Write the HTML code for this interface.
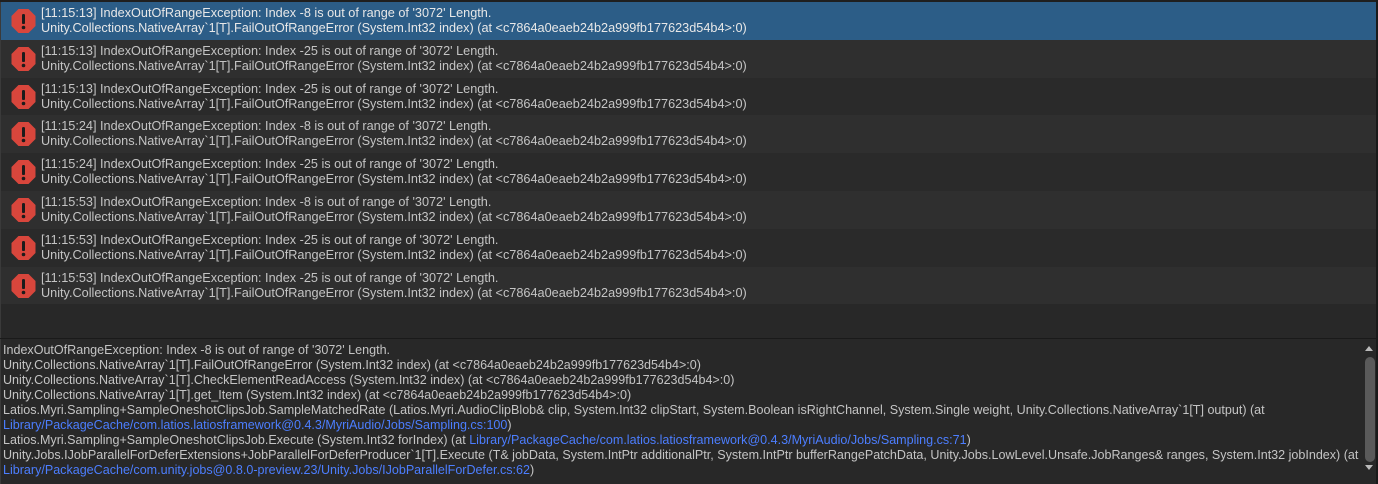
<!DOCTYPE html>
<html><head><style>
html,body{margin:0;padding:0;}
body{width:1378px;height:484px;background:#282828;overflow:hidden;position:relative;font-family:"Liberation Sans",sans-serif;font-size:12.7px;color:#c4c4c4;}
.top{position:absolute;left:0;top:0;width:1378px;height:2px;background:#1f1f1f;}
.list{position:absolute;left:0;top:2px;width:1376px;}
.row{position:relative;height:37.8px;background:#2f2f2f;border-left:1px solid #3a3a3a;box-sizing:border-box;}
.row.alt{background:#2a2a2a;}
.row.sel{background:#2c5d87;color:#e8e8e8;}
.row svg{position:absolute;left:9px;top:6px;}
.row .t{position:absolute;left:40px;top:4px;line-height:15px;white-space:nowrap;}
.rest{position:absolute;left:0;top:304px;width:1376px;height:34px;background:#282828;border-left:1px solid #3a3a3a;box-sizing:border-box;}
.div{position:absolute;left:0;top:338px;width:1378px;height:1px;background:#1a1a1a;}
.bottom{position:absolute;left:0;top:339px;width:1362px;height:145px;border-left:1px solid #3a3a3a;box-sizing:border-box;font-size:12.55px;}
.bottom .t{position:absolute;left:2px;top:4px;line-height:15.05px;white-space:nowrap;}
a{color:#4c7eff;text-decoration:none;}
.sb{position:absolute;left:1362px;top:339px;width:14px;height:145px;background:#282828;}
.thumb{position:absolute;left:1365px;top:357px;width:10px;height:105px;background:#5a5a5a;border-radius:5px;}
.rb{position:absolute;left:1376px;top:0;width:2px;height:484px;background:#1a1a1a;}
</style></head><body>
<div class="top"></div>
<div class="list">
<div class="row sel"><svg width="27" height="26" viewBox="0 0 26 26"><polygon points="8,1 18,1 25,8 25,18 18,25 8,25 1,18 1,8" fill="#d8463c"/><rect x="11.5" y="6" width="3" height="10" rx="1.3" fill="#1b1b1b"/><circle cx="13" cy="19.5" r="1.8" fill="#1b1b1b"/></svg><div class="t">[11:15:13] IndexOutOfRangeException: Index -8 is out of range of '3072' Length.<br>Unity.Collections.NativeArray`1[T].FailOutOfRangeError (System.Int32 index) (at &lt;c7864a0eaeb24b2a999fb177623d54b4&gt;:0)</div></div>
<div class="row"><svg width="27" height="26" viewBox="0 0 26 26"><polygon points="8,1 18,1 25,8 25,18 18,25 8,25 1,18 1,8" fill="#d8463c"/><rect x="11.5" y="6" width="3" height="10" rx="1.3" fill="#1b1b1b"/><circle cx="13" cy="19.5" r="1.8" fill="#1b1b1b"/></svg><div class="t">[11:15:13] IndexOutOfRangeException: Index -25 is out of range of '3072' Length.<br>Unity.Collections.NativeArray`1[T].FailOutOfRangeError (System.Int32 index) (at &lt;c7864a0eaeb24b2a999fb177623d54b4&gt;:0)</div></div>
<div class="row alt"><svg width="27" height="26" viewBox="0 0 26 26"><polygon points="8,1 18,1 25,8 25,18 18,25 8,25 1,18 1,8" fill="#d8463c"/><rect x="11.5" y="6" width="3" height="10" rx="1.3" fill="#1b1b1b"/><circle cx="13" cy="19.5" r="1.8" fill="#1b1b1b"/></svg><div class="t">[11:15:13] IndexOutOfRangeException: Index -25 is out of range of '3072' Length.<br>Unity.Collections.NativeArray`1[T].FailOutOfRangeError (System.Int32 index) (at &lt;c7864a0eaeb24b2a999fb177623d54b4&gt;:0)</div></div>
<div class="row"><svg width="27" height="26" viewBox="0 0 26 26"><polygon points="8,1 18,1 25,8 25,18 18,25 8,25 1,18 1,8" fill="#d8463c"/><rect x="11.5" y="6" width="3" height="10" rx="1.3" fill="#1b1b1b"/><circle cx="13" cy="19.5" r="1.8" fill="#1b1b1b"/></svg><div class="t">[11:15:24] IndexOutOfRangeException: Index -8 is out of range of '3072' Length.<br>Unity.Collections.NativeArray`1[T].FailOutOfRangeError (System.Int32 index) (at &lt;c7864a0eaeb24b2a999fb177623d54b4&gt;:0)</div></div>
<div class="row alt"><svg width="27" height="26" viewBox="0 0 26 26"><polygon points="8,1 18,1 25,8 25,18 18,25 8,25 1,18 1,8" fill="#d8463c"/><rect x="11.5" y="6" width="3" height="10" rx="1.3" fill="#1b1b1b"/><circle cx="13" cy="19.5" r="1.8" fill="#1b1b1b"/></svg><div class="t">[11:15:24] IndexOutOfRangeException: Index -25 is out of range of '3072' Length.<br>Unity.Collections.NativeArray`1[T].FailOutOfRangeError (System.Int32 index) (at &lt;c7864a0eaeb24b2a999fb177623d54b4&gt;:0)</div></div>
<div class="row"><svg width="27" height="26" viewBox="0 0 26 26"><polygon points="8,1 18,1 25,8 25,18 18,25 8,25 1,18 1,8" fill="#d8463c"/><rect x="11.5" y="6" width="3" height="10" rx="1.3" fill="#1b1b1b"/><circle cx="13" cy="19.5" r="1.8" fill="#1b1b1b"/></svg><div class="t">[11:15:53] IndexOutOfRangeException: Index -8 is out of range of '3072' Length.<br>Unity.Collections.NativeArray`1[T].FailOutOfRangeError (System.Int32 index) (at &lt;c7864a0eaeb24b2a999fb177623d54b4&gt;:0)</div></div>
<div class="row alt"><svg width="27" height="26" viewBox="0 0 26 26"><polygon points="8,1 18,1 25,8 25,18 18,25 8,25 1,18 1,8" fill="#d8463c"/><rect x="11.5" y="6" width="3" height="10" rx="1.3" fill="#1b1b1b"/><circle cx="13" cy="19.5" r="1.8" fill="#1b1b1b"/></svg><div class="t">[11:15:53] IndexOutOfRangeException: Index -25 is out of range of '3072' Length.<br>Unity.Collections.NativeArray`1[T].FailOutOfRangeError (System.Int32 index) (at &lt;c7864a0eaeb24b2a999fb177623d54b4&gt;:0)</div></div>
<div class="row"><svg width="27" height="26" viewBox="0 0 26 26"><polygon points="8,1 18,1 25,8 25,18 18,25 8,25 1,18 1,8" fill="#d8463c"/><rect x="11.5" y="6" width="3" height="10" rx="1.3" fill="#1b1b1b"/><circle cx="13" cy="19.5" r="1.8" fill="#1b1b1b"/></svg><div class="t">[11:15:53] IndexOutOfRangeException: Index -25 is out of range of '3072' Length.<br>Unity.Collections.NativeArray`1[T].FailOutOfRangeError (System.Int32 index) (at &lt;c7864a0eaeb24b2a999fb177623d54b4&gt;:0)</div></div>
</div>
<div class="rest"></div>
<div class="div"></div>
<div class="bottom"><div class="t">IndexOutOfRangeException: Index -8 is out of range of '3072' Length.<br>
Unity.Collections.NativeArray`1[T].FailOutOfRangeError (System.Int32 index) (at &lt;c7864a0eaeb24b2a999fb177623d54b4&gt;:0)<br>
Unity.Collections.NativeArray`1[T].CheckElementReadAccess (System.Int32 index) (at &lt;c7864a0eaeb24b2a999fb177623d54b4&gt;:0)<br>
Unity.Collections.NativeArray`1[T].get_Item (System.Int32 index) (at &lt;c7864a0eaeb24b2a999fb177623d54b4&gt;:0)<br>
Latios.Myri.Sampling+SampleOneshotClipsJob.SampleMatchedRate (Latios.Myri.AudioClipBlob&amp; clip, System.Int32 clipStart, System.Boolean isRightChannel, System.Single weight, Unity.Collections.NativeArray`1[T] output) (at<br>
<a>Library/PackageCache/com.latios.latiosframework@0.4.3/MyriAudio/Jobs/Sampling.cs:100</a>)<br>
Latios.Myri.Sampling+SampleOneshotClipsJob.Execute (System.Int32 forIndex) (at <a>Library/PackageCache/com.latios.latiosframework@0.4.3/MyriAudio/Jobs/Sampling.cs:71</a>)<br>
Unity.Jobs.IJobParallelForDeferExtensions+JobParallelForDeferProducer`1[T].Execute (T&amp; jobData, System.IntPtr additionalPtr, System.IntPtr bufferRangePatchData, Unity.Jobs.LowLevel.Unsafe.JobRanges&amp; ranges, System.Int32 jobIndex) (at<br>
<a>Library/PackageCache/com.unity.jobs@0.8.0-preview.23/Unity.Jobs/IJobParallelForDefer.cs:62</a>)</div></div>
<div class="sb"><svg style="position:absolute;left:3px;top:7px" width="8" height="6"><polygon points="4,0 8,5 0,5" fill="#bbb"/></svg><svg style="position:absolute;left:3px;top:126px" width="8" height="6"><polygon points="0,0 8,0 4,5" fill="#bbb"/></svg></div>
<div class="thumb"></div>
<div class="rb"></div>
</body></html>
